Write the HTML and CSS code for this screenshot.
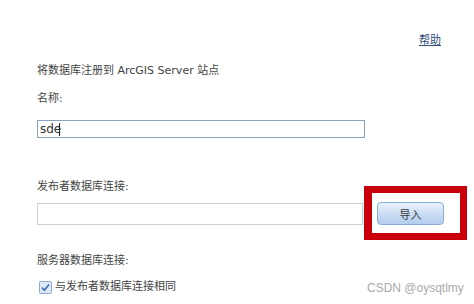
FILE: index.html
```html
<!DOCTYPE html>
<html lang="zh-CN">
<head>
<meta charset="utf-8">
<title>注册数据库</title>
<link rel="stylesheet" href="styles.css">
</head>
<body>
<div class="page">
  <div class="help-row"><a class="help" href="#">帮助</a></div>
  <p class="title">将数据库注册到 ArcGIS Server 站点</p>
  <p class="label name-label">名称:</p>
  <div class="field name-field"><span class="val">sde</span><span class="caret"></span></div>
  <p class="label pub-label">发布者数据库连接:</p>
  <div class="import-row">
    <div class="field pub-field"></div>
    <div class="btn-wrap"><button class="btn" type="button">导入</button></div>
  </div>
  <p class="label srv-label">服务器数据库连接:</p>
  <label class="check-row">
    <svg class="check" width="13" height="13" viewBox="0 0 13 13">
      <rect x="0.5" y="0.5" width="12" height="12" rx="1" fill="#dde9f7" stroke="#8ea9cb"/>
      <path d="M3 6.6 L5.4 9.2 L10 3.6" fill="none" stroke="#3a6db5" stroke-width="1.6"/>
    </svg>
    <span>与发布者数据库连接相同</span>
  </label>
  <div class="watermark">CSDN @oysqtlmy</div>
</div>
</body>
</html>
```

FILE: styles.css
```css
html, body {
  margin: 0;
  padding: 0;
  background: #ffffff;
}
.page {
  position: relative;
  width: 474px;
  height: 304px;
  box-sizing: border-box;
  padding: 34px 0 0 37px;
  font-family: "DejaVu Sans", "Noto Sans CJK SC", sans-serif;
  font-size: 11px;
  line-height: 14px;
  color: #444444;
  overflow: hidden;
}
.help-row {
  display: flex;
  justify-content: flex-end;
  padding-right: 33px;
  height: 14px;
}
.help {
  color: #2e4b78;
  text-decoration: underline;
}
p {
  margin: 0;
}
.title {
  margin-top: 16px;
}
.name-label {
  margin-top: 14px;
}
.field {
  box-sizing: border-box;
  background: #ffffff;
}
.name-field {
  margin-top: 14px;
  width: 328px;
  height: 18px;
  border: 1px solid #8aa3bf;
  display: flex;
  align-items: center;
  padding-left: 2px;
  font-size: 12px;
  color: #333333;
}
.caret {
  width: 1px;
  height: 13px;
  background: #222222;
  margin-left: -2px;
}
.pub-label {
  margin-top: 42px;
}
.import-row {
  margin-top: 8px;
  display: flex;
  align-items: flex-end;
}
.pub-field {
  width: 326px;
  height: 22px;
  border: 1px solid #cfcfcf;
}
.btn-wrap {
  position: relative;
  margin-left: 14px;
}
.btn-wrap::before {
  content: "";
  position: absolute;
  left: -13px;
  top: -16px;
  right: -23px;
  bottom: -15px;
  border: 7px solid #c9000b;
  border-left-width: 8px;
}
.btn {
  display: block;
  width: 67px;
  height: 23px;
  margin: 0;
  padding: 0;
  border: 1px solid #88acd6;
  border-radius: 4px;
  background: linear-gradient(#eaf2fc, #c9dcf3 55%, #b3cdee);
  font-family: "Noto Sans CJK SC", sans-serif;
  font-size: 11px;
  color: #3a3a3a;
}
.srv-label {
  margin-top: 29px;
}
.check-row {
  margin-top: 12px;
  margin-left: 2px;
  display: flex;
  align-items: center;
  gap: 3px;
  height: 14px;
}
.check {
  display: block;
}
.watermark {
  position: absolute;
  left: 367px;
  top: 281px;
  font-family: "Liberation Sans", sans-serif;
  font-size: 12px;
  line-height: 14px;
  color: #aaaaaa;
}
```
